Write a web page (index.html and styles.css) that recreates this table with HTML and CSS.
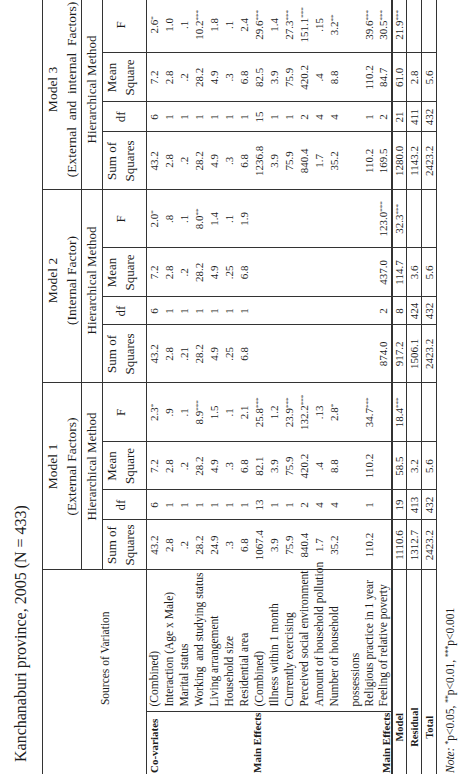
FILE: index.html
```html
<!DOCTYPE html>
<html>
<head>
<meta charset="utf-8">
<link rel="stylesheet" href="styles.css">
</head>
<body>
<div class="page">
  <div class="title">Kanchanaburi province, 2005 (N = 433)</div>
  <table class="anova">
    <colgroup>
      <col class="w-cat"><col class="w-item">
      <col class="w50"><col class="w30"><col class="w48"><col class="w59">
      <col class="w58"><col class="w28"><col class="w49"><col class="w58">
      <col class="w58"><col class="w30"><col class="w49"><col class="w56">
    </colgroup>
    <thead>
      <tr class="h1">
        <th class="src" colspan="2" rowspan="3">Sources of Variation</th>
        <th class="model m1" colspan="4">Model 1<br>(External Factors)</th>
        <th class="model m2" colspan="4">Model 2<br>(Internal Factor)</th>
        <th class="model m3" colspan="4">Model 3<br>(External&nbsp; and&nbsp; internal&nbsp; Factors)</th>
      </tr>
      <tr class="h2">
        <th class="meth m1" colspan="4">Hierarchical Method</th>
        <th class="meth m2" colspan="4">Hierarchical Method</th>
        <th class="meth m3" colspan="4">Hierarchical Method</th>
      </tr>
      <tr class="h3">
        <th>Sum of<br>Squares</th><th>df</th><th>Mean<br>Square</th><th>F</th>
        <th>Sum of<br>Squares</th><th>df</th><th>Mean<br>Square</th><th>F</th>
        <th>Sum of<br>Squares</th><th>df</th><th>Mean<br>Square</th><th>F</th>
      </tr>
    </thead>
    <tbody>
      <tr>
        <td class="cat">Co-variates</td><td class="item">(Combined)</td>
        <td>43.2</td><td>6</td><td>7.2</td><td>2.3<sup>*</sup></td>
        <td>43.2</td><td>6</td><td>7.2</td><td>2.0<sup>*</sup></td>
        <td>43.2</td><td>6</td><td>7.2</td><td>2.6<sup>*</sup></td>
      </tr>
      <tr>
        <td class="cat"></td><td class="item">Interaction (Age x Male)</td>
        <td>2.8</td><td>1</td><td>2.8</td><td>.9</td>
        <td>2.8</td><td>1</td><td>2.8</td><td>.8</td>
        <td>2.8</td><td>1</td><td>2.8</td><td>1.0</td>
      </tr>
      <tr>
        <td class="cat"></td><td class="item">Marital status</td>
        <td>.2</td><td>1</td><td>.2</td><td>.1</td>
        <td>.21</td><td>1</td><td>.2</td><td>.1</td>
        <td>.2</td><td>1</td><td>.2</td><td>.1</td>
      </tr>
      <tr>
        <td class="cat"></td><td class="item">Working&nbsp; and studying status</td>
        <td>28.2</td><td>1</td><td>28.2</td><td>8.9<sup>***</sup></td>
        <td>28.2</td><td>1</td><td>28.2</td><td>8.0<sup>**</sup></td>
        <td>28.2</td><td>1</td><td>28.2</td><td>10.2<sup>***</sup></td>
      </tr>
      <tr>
        <td class="cat"></td><td class="item">Living arrangement</td>
        <td>24.9</td><td>1</td><td>4.9</td><td>1.5</td>
        <td>4.9</td><td>1</td><td>4.9</td><td>1.4</td>
        <td>4.9</td><td>1</td><td>4.9</td><td>1.8</td>
      </tr>
      <tr>
        <td class="cat"></td><td class="item">Household size</td>
        <td>.3</td><td>1</td><td>.3</td><td>.1</td>
        <td>.25</td><td>1</td><td>.25</td><td>.1</td>
        <td>.3</td><td>1</td><td>.3</td><td>.1</td>
      </tr>
      <tr>
        <td class="cat"></td><td class="item">Residential area</td>
        <td>6.8</td><td>1</td><td>6.8</td><td>2.1</td>
        <td>6.8</td><td>1</td><td>6.8</td><td>1.9</td>
        <td>6.8</td><td>1</td><td>6.8</td><td>2.4</td>
      </tr>
      <tr>
        <td class="cat cat-group">Main Effects</td><td class="item">(Combined)</td>
        <td>1067.4</td><td>13</td><td>82.1</td><td>25.8<sup>***</sup></td>
        <td></td><td></td><td></td><td></td>
        <td>1236.8</td><td>15</td><td>82.5</td><td>29.6<sup>***</sup></td>
      </tr>
      <tr>
        <td class="cat"></td><td class="item">Illness within 1 month</td>
        <td>3.9</td><td>1</td><td>3.9</td><td>1.2</td>
        <td></td><td></td><td></td><td></td>
        <td>3.9</td><td>1</td><td>3.9</td><td>1.4</td>
      </tr>
      <tr>
        <td class="cat"></td><td class="item">Currently exercising</td>
        <td>75.9</td><td>1</td><td>75.9</td><td>23.9<sup>***</sup></td>
        <td></td><td></td><td></td><td></td>
        <td>75.9</td><td>1</td><td>75.9</td><td>27.3<sup>***</sup></td>
      </tr>
      <tr>
        <td class="cat"></td><td class="item">Perceived social environment</td>
        <td>840.4</td><td>2</td><td>420.2</td><td>132.2<sup>***</sup></td>
        <td></td><td></td><td></td><td></td>
        <td>840.4</td><td>2</td><td>420.2</td><td>151.1<sup>***</sup></td>
      </tr>
      <tr>
        <td class="cat"></td><td class="item">Amount of household pollution</td>
        <td>1.7</td><td>4</td><td>.4</td><td>.13</td>
        <td></td><td></td><td></td><td></td>
        <td>1.7</td><td>4</td><td>.4</td><td>.15</td>
      </tr>
      <tr class="tall">
        <td class="cat"></td><td class="item"><span class="ln1">Number of household</span><span class="ln2">possessions</span></td>
        <td>35.2</td><td>4</td><td>8.8</td><td>2.8<sup>*</sup></td>
        <td></td><td></td><td></td><td></td>
        <td>35.2</td><td>4</td><td>8.8</td><td>3.2<sup>**</sup></td>
      </tr>
      <tr class="r15">
        <td class="cat"></td><td class="item">Religious practice in 1 year</td>
        <td>110.2</td><td>1</td><td>110.2</td><td>34.7<sup>***</sup></td>
        <td></td><td></td><td></td><td></td>
        <td>110.2</td><td>1</td><td>110.2</td><td>39.6<sup>***</sup></td>
      </tr>
      <tr class="r15 last">
        <td class="cat cat-low">Main Effects</td><td class="item">Feeling of relative poverty</td>
        <td></td><td></td><td></td><td></td>
        <td>874.0</td><td>2</td><td>437.0</td><td>123.0<sup>***</sup></td>
        <td>169.5</td><td>2</td><td>84.7</td><td>30.5<sup>***</sup></td>
      </tr>
      <tr class="sum first">
        <td class="tot" colspan="2">Model</td>
        <td>1110.6</td><td>19</td><td>58.5</td><td>18.4<sup>***</sup></td>
        <td>917.2</td><td>8</td><td>114.7</td><td>32.3<sup>***</sup></td>
        <td>1280.0</td><td>21</td><td>61.0</td><td>21.9<sup>***</sup></td>
      </tr>
      <tr class="sum r15">
        <td class="tot" colspan="2">Residual</td>
        <td>1312.7</td><td>413</td><td>3.2</td><td></td>
        <td>1506.1</td><td>424</td><td>3.6</td><td></td>
        <td>1143.2</td><td>411</td><td>2.8</td><td></td>
      </tr>
      <tr class="sum">
        <td class="tot" colspan="2">Total</td>
        <td>2423.2</td><td>432</td><td>5.6</td><td></td>
        <td>2423.2</td><td>432</td><td>5.6</td><td></td>
        <td>2423.2</td><td>432</td><td>5.6</td><td></td>
      </tr>
    </tbody>
  </table>
  <div class="note"><i>Note:</i> <sup>*</sup>p&lt;0.05, <sup>**</sup>p&lt;0.01, <sup>***</sup>p&lt;0.001</div>
</div>
</body>
</html>
```

FILE: styles.css
```css
html, body {
  margin: 0;
  padding: 0;
  background: #ffffff;
  overflow: hidden;
}
body {
  width: 474px;
  height: 774px;
}
.page {
  width: 774px;
  height: 474px;
  transform-origin: 0 0;
  transform: translateY(774px) rotate(-90deg);
  font-family: "Liberation Serif", "Times New Roman", serif;
  color: #1c1c1c;
}
.title {
  height: 42px;
  line-height: 42px;
  font-size: 16px;
  padding-left: 12px;
  white-space: nowrap;
}
table.anova {
  border-collapse: collapse;
  table-layout: fixed;
  width: 777px;
  border-top: 1px solid #333;
}
col.w-cat { width: 62px; }
col.w-item { width: 142px; }
col.w50 { width: 50px; }
col.w30 { width: 30px; }
col.w48 { width: 48px; }
col.w59 { width: 59px; }
col.w58 { width: 58px; }
col.w28 { width: 28px; }
col.w49 { width: 49px; }
col.w56 { width: 56px; }

th {
  font-weight: normal;
  font-size: 13px;
  padding: 0;
  text-align: center;
  border: 1px solid #333;
  white-space: nowrap;
}
tr.h1 { height: 38px; }
tr.h2 { height: 21px; }
tr.h3 { height: 41px; }
tr.h1 th.model {
  line-height: 19px;
  font-size: 13.5px;
}
th.src {
  border-left: none;
  font-size: 11.5px;
  padding-left: 28px;
  padding-top: 20px;
}
th.m1 { padding-left: 20px; }
th.m2 { padding-left: 12px; }
th.m3 { padding-left: 8px; }
tr.h2 th { line-height: 18px; }
tr.h3 th {
  line-height: 18px;
  padding-bottom: 7px;
}

tbody tr { height: 15px; }
td {
  padding: 0;
  line-height: 13px;
  font-size: 11px;
  text-align: center;
  white-space: nowrap;
  border-left: 1px solid #333;
  border-right: 1px solid #333;
  vertical-align: middle;
}
td.cat {
  border-left: none;
  text-align: left;
  font-weight: bold;
  font-size: 11px;
  padding-left: 1px;
  overflow: visible;
}
td.cat-group {
  vertical-align: top;
  line-height: 11px;
}
td.cat-low {
  vertical-align: bottom;
  line-height: 9px;
}
td.item {
  text-align: left;
  font-size: 11.5px;
  padding-left: 5px;
  overflow: visible;
}
tbody tr.tall { height: 35px; }
tr.tall td {
  vertical-align: top;
  line-height: 13px;
  padding-top: 1px;
}
.ln1, .ln2 {
  display: block;
  line-height: 13px;
}
.ln2 { margin-top: 8px; }
tbody tr.r15 { height: 15px; }
tr.last td { border-bottom: 2px solid #333; }
tr.sum td {
  border-top: 1px solid #333;
  border-bottom: 1px solid #333;
}
tr.first td { border-top: 2px solid #333; }
td.tot {
  border-left: none;
  font-weight: bold;
  font-size: 10.5px;
  text-align: center;
  padding-right: 124px;
  padding-left: 14px;
}
sup {
  font-size: 7px;
  line-height: 0;
  vertical-align: 3px;
}
.note {
  line-height: 26px;
  font-size: 11.5px;
  padding-left: 1px;
  white-space: nowrap;
}
.note sup { font-size: 7.5px; }
```
